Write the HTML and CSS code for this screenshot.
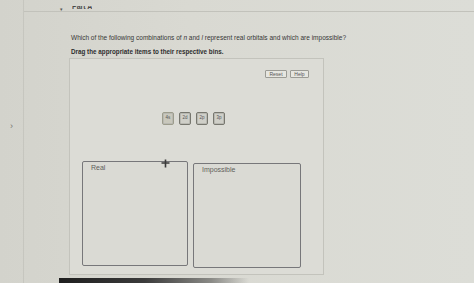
FILE: index.html
```html
<!DOCTYPE html>
<html lang="en">

<head>
    <meta charset="UTF-8">
    <title>Part A</title>
    <link rel="stylesheet" href="styles.css">
</head>

<body>
    <div class="side">
        <span class="chev">&rsaquo;</span>
    </div>

    <div class="main">
        <div class="topbar">
            <span class="bullet">&#9662;</span>
            <span class="part"><span>Part A</span></span>
        </div>

        <div class="content">
            <p class="question">Which of the following combinations of <i>n</i> and <i>l</i> represent real orbitals and which are impossible?</p>
            <p class="instr">Drag the appropriate items to their respective bins.</p>

            <div class="panel">
                <div class="tools">
                    <button class="btn">Reset</button>
                    <button class="btn">Help</button>
                </div>

                <div class="items">
                    <div class="item first">4s</div>
                    <div class="item">2d</div>
                    <div class="item">2p</div>
                    <div class="item">3p</div>
                </div>

                <div class="bins">
                    <div class="bin real"><span class="label">Real</span></div>
                    <div class="bin impossible"><span class="label">Impossible</span></div>
                </div>
            </div>

            <div class="bezel"></div>
        </div>
    </div>

    <!-- mouse cursor over the Real bin -->
    <svg class="cursor" width="9" height="9" viewBox="0 0 9 9">
        <path d="M4.5 0.5 V8.5 M0.5 4 H8.5" stroke="#3a3a3a" stroke-width="1.6" fill="none" />
    </svg>
</body>

</html>
```

FILE: styles.css
```css
body {
    margin: 0;
    height: 283px;
    overflow: hidden;
    display: flex;
    flex-direction: row;
    background: linear-gradient(to right, #d3d3cc, #d9d9d2 40%, #dcddd7);
    font-family: "Liberation Sans", Arial, sans-serif;
    color: #3a3a3a;
}

.side {
    width: 24px;
    border-right: 1px solid #c6c6bf;
    display: flex;
    justify-content: center;
    padding-top: 122px;
    box-sizing: border-box;
}
.chev {
    font-size: 9px;
    line-height: 9px;
    color: #77776f;
}

.main {
    flex: 1;
    display: flex;
    flex-direction: column;
}

.topbar {
    height: 12px;
    border-bottom: 1px solid #c2c2bb;
    display: flex;
    align-items: flex-start;
    overflow: hidden;
    padding-left: 36px;
}
.bullet {
    font-size: 5px;
    line-height: 5px;
    margin-top: 7px;
    color: #555;
}
/* only the lower part of the heading shows, the rest is scrolled off */
.part {
    display: block;
    height: 5px;
    overflow: hidden;
    margin: 6px 0 0 9px;
}
.part span {
    display: block;
    margin-top: -3px;
    font-size: 7px;
    line-height: 8px;
    font-weight: bold;
    color: #4a4a4a;
}

.content {
    padding-left: 47px;
}

.question {
    margin: 22px 0 0 0;
    font-size: 6.5px;
    line-height: 8px;
    color: #363636;
}
.instr {
    margin: 6px 0 0 0;
    font-size: 6.3px;
    line-height: 8px;
    font-weight: bold;
    color: #2e2e2e;
}

.panel {
    margin: 2px 0 0 -2px;
    width: 255px;
    height: 217px;
    box-sizing: border-box;
    border: 1px solid #c3c3bc;
    background: #dcdcd6;
    padding: 11px 14px 0 12px;
    display: flex;
    flex-direction: column;
}

.tools {
    display: flex;
    justify-content: flex-end;
    gap: 3px;
}
.btn {
    height: 8px;
    padding: 0 2px;
    font-family: "Liberation Sans", Arial, sans-serif;
    font-size: 5px;
    line-height: 6px;
    color: #555;
    background: #e6e6e0;
    border: 1px solid #9b9b95;
    border-radius: 1px;
}
.btn:first-child {
    width: 22px;
}
.btn:last-child {
    width: 19px;
}

.items {
    margin-top: 34px;
    display: flex;
    justify-content: center;
    gap: 5px;
    padding-right: 4px;
}
.item {
    width: 12px;
    height: 13px;
    box-sizing: border-box;
    border: 1.5px solid #77776f;
    border-radius: 2px;
    box-shadow: inset 0 0 0 1px #b9b9b2;
    background: #cfcfc8;
    font-size: 4.5px;
    line-height: 10px;
    text-align: center;
    color: #555;
}
.item.first {
    border-color: #9c9c8c;
    background: #c9c8bc;
}

.bins {
    margin-top: 36px;
    display: flex;
    gap: 5px;
}
.bin {
    height: 105px;
    box-sizing: border-box;
    border: 1.5px solid #77777a;
    border-radius: 2px;
    background: #dadad4;
    padding: 1px 0 0 8px;
}
.real {
    width: 106px;
}
.impossible {
    width: 108px;
    margin-top: 2px;
}
.label {
    display: block;
    font-size: 7px;
    line-height: 9px;
    color: #5f5f5b;
}

.bezel {
    margin: 3px 0 0 -12px;
    width: 190px;
    height: 5px;
    background: linear-gradient(to right, #1e1e1e, #3b3b3b 45%, #8a8a86 80%, rgba(200, 200, 195, 0));
}

.cursor {
    position: absolute;
    left: 161px;
    top: 159px;
}
```
